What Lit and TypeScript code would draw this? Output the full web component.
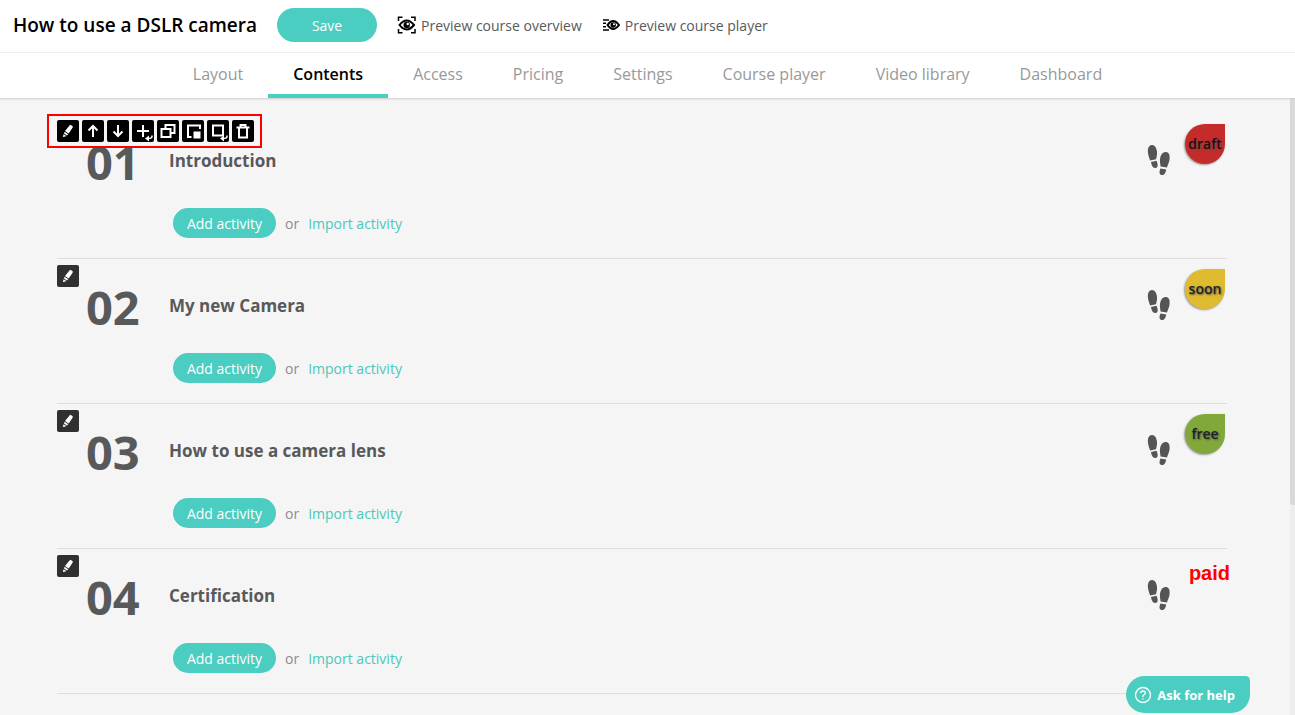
import { LitElement, html, css, svg } from "lit";
import { customElement, property } from "lit/decorators.js";

const returnArrow = svg`<path stroke-width="1.500" d="M20 15.500v1q0 2-4 2"/><path fill="currentColor" stroke="none" d="M13 18.500l4-3v6z"/>`;

const icons: Record<string, unknown> = {
  edit: svg`<path fill="currentColor" d="M12.500 5.500l1-.7 2.200 1.400v1.300l-4 6-3.700-2.500zM7.600 11.700l3.600 2.500-1.200 1.300-3-2zM6.600 14.200l2.600 1.700-.9.600-2.500.6z"/>`,
  up: svg`<path d="M11 17V6.500M6.500 10.500L11 6l4.500 4.500"/>`,
  down: svg`<path d="M11 5v10.500M6.500 11.500L11 16l4.500-4.500"/>`,
  plus: svg`<path d="M5 11h12M11 5v12"/>${returnArrow}`,
  copy: svg`<path d="M8.500 9V5h9v8h-4M4.500 9h9v8h-9z"/>`,
  inset: svg`<path d="M9.500 17H6V5.500h12V9"/><path fill="currentColor" stroke="none" d="M11.500 11.500h7v7h-7z"/>`,
  insert: svg`<path d="M6 5.500h10v10H6z"/>${returnArrow}`,
  trash: svg`<path d="M4.500 7.500h13M8.500 7V5h5v2M7 8v9.500h8V8"/>`,
};
const tools = [
  ["edit", "Edit"], ["up", "Move up"], ["down", "Move down"], ["plus", "Add below"],
  ["copy", "Duplicate"], ["inset", "Place"], ["insert", "Insert section"], ["trash", "Delete"],
];

@customElement("course-section")
export class CourseSection extends LitElement {
  @property() number = "";
  @property() name = "";
  @property() status = "";
  @property({ type: Boolean }) selected = false;

  static styles = css`
    :host { display: block; border-bottom: 1px solid #dedede; height: 145px; box-sizing: border-box; position: relative; }
    .row { display: flex; align-items: flex-start; padding: 19px 0 0 29px; }
    .number { width: 83px; font-size: 47px; line-height: 58px; font-weight: 700; color: #58595b; }
    .body { flex: 1; }
    h2 { margin: 0; font-size: 17px; line-height: 56px; font-weight: 700; color: #58595b; }
    .actions { display: flex; align-items: center; gap: 9px; padding: 19px 0 0 4px; font-size: 14px; color: #8c8c8c; }
    .add { font: inherit; color: #fff; background: #4bcdc1; border: 0; border-radius: 15px; width: 103px; height: 30px; padding: 0; }
    a { color: #4bc8bb; font-weight: 500; text-decoration: none; }
    .side { display: flex; align-items: flex-start; width: 80px; }
    .steps { width: 24px; height: 32px; padding-top: 11px; fill: #555; }
    .badge { position: absolute; right: 2px; top: 10px; width: 40px; height: 40px; border-radius: 50% 0 50% 50%; box-shadow: -1px 1px 2px #999; font-size: 14px; line-height: 40px; font-weight: 500; text-align: center; color: #222; text-shadow: 1px 1px 2px #555; white-space: nowrap; }
    .badge { font-weight: 600; }
    .draft { background: #c42b2b; color: #2b0808; }
    .soon { background: #e0bb30; }
    .free { background: #80a83a; }
    .paid { position: absolute; right: -3px; top: 12px; font: 700 20px/24px "Liberation Sans", Arial, sans-serif; color: #f00; }
    .tools { position: absolute; left: 0; top: 6px; display: flex; gap: 3px; }
    .tools button { width: 22px; height: 22px; padding: 0; border: 0; border-radius: 2px; background: #303030; color: #fff; }
    .tools svg { display: block; fill: none; stroke: currentColor; stroke-width: 2; }
    .tools .pen { stroke: none; }
    .tools.selected { left: -10px; top: 0; border: 2px solid red; padding: 4px 6px 4px 8px; }
    .selected button { background: #000; }
  `;

  render() {
    const list = this.selected ? tools : tools.slice(0, 1);
    return html`
      <div class="row">
        <div class="number">${this.number}</div>
        <div class="body">
          <h2>${this.name}</h2>
          <div class="actions"><button class="add">Add activity</button><span>or</span><a href="#import">Import activity</a></div>
        </div>
        <div class="side">
          <svg class="steps" viewBox="0 0 24 32" aria-hidden="true">
            <path d="M5 1C1.500 1 .5 5 1 9c.3 3 1.500 5 2 7.500l6-1.300c.4-2 1.300-4 1-7.200C9.600 4 8 1 5 1zM4 18l5.500-1.200c1.500 3 2 7-1 7.200-3 .2-4-3-4.500-6zM19 8c-3.500-.5-5.500 3.500-6 7-.4 3.500.5 5 .5 7.500l6.500 1c.5-2.500 2-4.500 2.500-7.500.5-4 .2-7.500-3.500-8zM13.500 24.500l5.700 1c-.5 3-1.700 6-4.400 5.500-3-.5-2.500-4-1.300-6.500z"/>
          </svg>
        </div>
      </div>
      <div class=${this.status === "paid" ? "paid" : `badge ${this.status}`}>${this.status}</div>
      <div class="tools ${this.selected ? "selected" : ""}">
        ${list.map(([id, label]) => html`<button aria-label=${label}><svg class=${id === "edit" ? "pen" : ""} width="22" height="22" viewBox="0 0 22 22">${icons[id]}</svg></button>`)}
      </div>`;
  }
}

@customElement("app-root")
export class AppRoot extends LitElement {
  static styles = css`
    :host { display: flex; flex-direction: column; height: 100vh; overflow: hidden; position: relative; background: #f5f5f5; font-family: "Segoe UI", "Open Sans", "Noto Sans", sans-serif; }
    header { background: #fff; display: flex; align-items: center; height: 50px; padding: 0 0 2px 13px; border-bottom: 1px solid #f0f0f0; }
    h1 { margin: 0 20px 0 0; font-size: 19px; font-weight: 600; color: #000; white-space: nowrap; }
    .save { font: inherit; font-size: 14px; color: #fff; background: #4bcdc1; width: 100px; height: 34px; border: 0; border-radius: 17px; margin-right: 20px; }
    .preview { display: flex; align-items: center; gap: 5px; margin-right: 20px; font-size: 14px; color: #58595b; text-decoration: none; white-space: nowrap; }
    nav { background: #fff; display: flex; justify-content: center; height: 45px; box-shadow: 0 1px 2px #ccc; z-index: 1; }
    nav a { padding: 0 25px; font-size: 16px; line-height: 43px; color: #999; text-decoration: none; border-bottom: 4px solid transparent; height: 41px; white-space: nowrap; }
    nav .active { color: #000; font-weight: 600; border-color: #4bcdc1; }
    main { flex: 1; padding: 16px 68px 0 57px; }
    .track { position: absolute; right: 0; top: 98px; bottom: 0; width: 5px; background: #eee; }
    .thumb { height: 66%; background: #d9d9d9; border-radius: 0 0 0 3px; }
    .help { position: absolute; right: 45px; bottom: 2px; display: flex; align-items: center; gap: 5px; padding: 0 15px 0 8px; height: 37px; border: 0; border-radius: 20px 5px 20px 20px; background: #4bcdc1; color: #fff; font: inherit; font-size: 13px; font-weight: 700; }
  `;

  render() {
    return html`
      <header>
        <h1>How to use a DSLR camera</h1>
        <button class="save">Save</button>
        <a class="preview" href="#overview"><svg width="19" height="18" viewBox="0 0 19 18" fill="none" stroke="#000" stroke-width="1.500"><path d="M1.500 5V1.200h4M14 1.200h4V5M18 13v3.800h-4M5.500 16.800h-4V13"/><path stroke-width="2" d="M2.500 9q7-9 14.500 0-7.500 9-14.500 0z"/><circle cx="9.700" cy="9" r="3.200" fill="#000" stroke="none"/><circle cx="10.700" cy="8" r="1.200" fill="#fff" stroke="none"/></svg>Preview course overview</a>
        <a class="preview" href="#player"><svg width="18" height="18" viewBox="0 0 18 18" fill="none" stroke="#000" stroke-width="1.500"><path d="M1 4h6M1 7.300h3M1 10.700h3M1 14h6"/><path stroke-width="2" d="M5.500 9q5.500-8 11.500 0-6 8-11.500 0z"/><circle cx="11.200" cy="9" r="2.700" fill="#000" stroke="none"/><circle cx="12" cy="8.200" r="1" fill="#fff" stroke="none"/></svg>Preview course player</a>
      </header>
      <nav>${["Layout", "Contents", "Access", "Pricing", "Settings", "Course player", "Video library", "Dashboard"].map((t) => html`<a href="#" class=${t === "Contents" ? "active" : ""}>${t}</a>`)}</nav>
      <main>
        <course-section number="01" name="Introduction" status="draft" selected></course-section>
        <course-section number="02" name="My new Camera" status="soon"></course-section>
        <course-section number="03" name="How to use a camera lens" status="free"></course-section>
        <course-section number="04" name="Certification" status="paid"></course-section>
      </main>
      <div class="track"><div class="thumb"></div></div>
      <button class="help"><svg width="18" height="18" viewBox="0 0 18 18" fill="none" stroke="#fff" stroke-width="1.300"><circle cx="9" cy="9" r="7.500"/><path d="M6.700 7q0-2 2.300-2t2.300 2Q11.300 8.300 9 9.500V11M9 12.300v1.300"/></svg>Ask for help</button>`;
  }
}
